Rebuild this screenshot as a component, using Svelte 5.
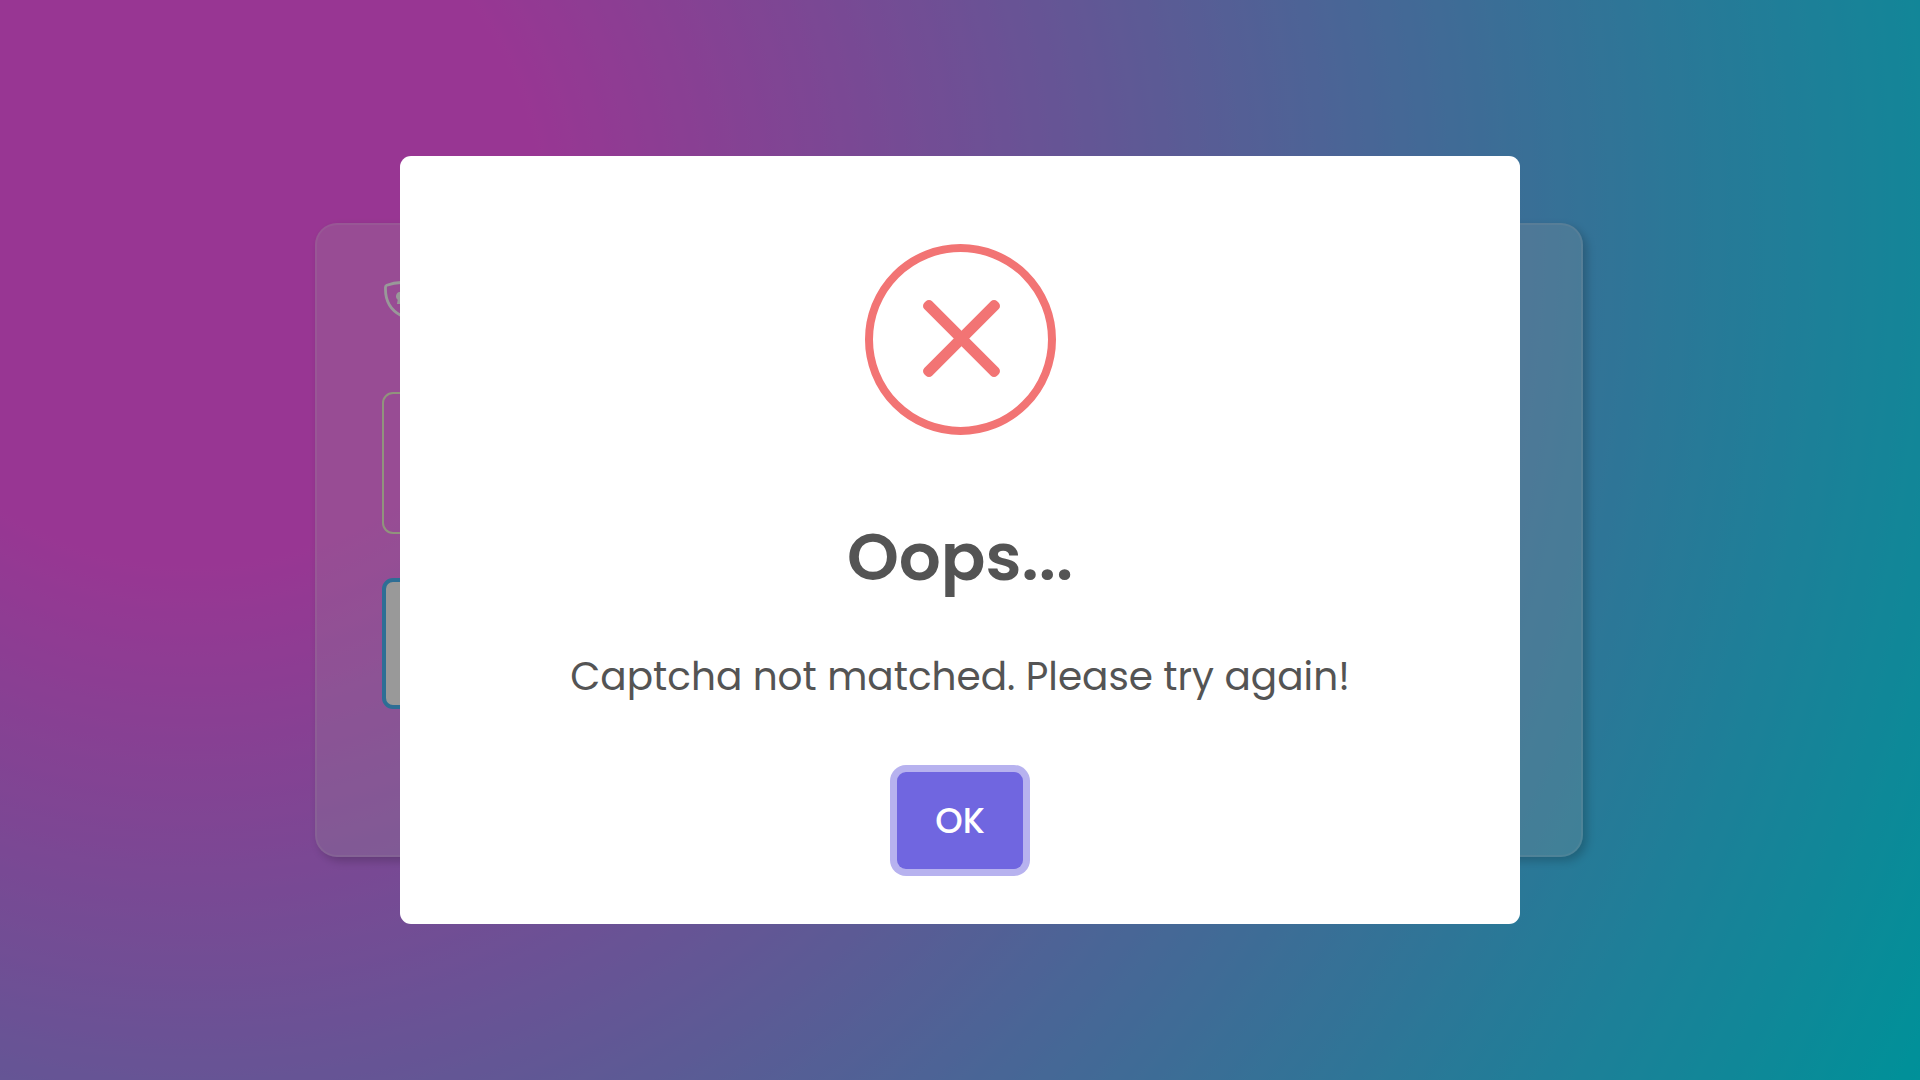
<script>
  let answer = $state('');
  let open = $state(true);
</script>

<main class="page">
  <form class="card" onsubmit={(e) => e.preventDefault()}>
    <svg class="shield" viewBox="0 0 36 36" aria-hidden="true">
      <path
        d="M19 1.5C14 1.5 8 3 4.8 4.2C3.8 4.6 3.5 5.2 3.5 6.2C3 19 8.5 29 19 34.5C29 29 34.5 19 34 6.2C34 5.200 33.700 4.600 32.700 4.200C29.500 3 24 1.500 19 1.500Z"
        fill="none"
        stroke="currentColor"
        stroke-width="2.8"
      />
      <path d="M18.500 10.800a4.500 4.500 0 0 0-2.800 8L15 23h7l-.7-4.200a4.500 4.500 0 0 0-2.800-8Z" fill="currentColor" />
    </svg>
    <div class="captcha"></div>
    <input class="answer" type="text" aria-label="Captcha" bind:value={answer} />
  </form>
</main>

{#if open}
  <div class="backdrop">
    <div class="modal" role="alertdialog" aria-modal="true" aria-labelledby="title" aria-describedby="message">
      <svg class="error" viewBox="0 0 191 191" aria-hidden="true">
        <circle cx="95.5" cy="95.5" r="91.5" fill="none" stroke="currentColor" stroke-width="8" />
        <g fill="currentColor">
          <rect x="45" y="89" width="103" height="11" rx="4.4" transform="rotate(45 96.5 94.5)" />
          <rect x="45" y="89" width="103" height="11" rx="4.4" transform="rotate(-45 96.5 94.5)" />
        </g>
      </svg>
      <h2 id="title">Oops...</h2>
      <p id="message">Captcha not matched. Please try again!</p>
      <button type="button" onclick={() => (open = false)}>OK</button>
    </div>
  </div>
{/if}

<style>
  :global(body) {
    margin: 0;
    font-family: Poppins, Inter, 'Open Sans', sans-serif;
  }

  .page {
    box-sizing: border-box;
    min-height: 100vh;
    padding-right: 22px;
    display: flex;
    align-items: center;
    justify-content: center;
    background: radial-gradient(circle at 10% 20%, #fe5bf5 18%, #00f2ff 100%);
  }

  .card {
    box-sizing: border-box;
    width: 1268px;
    max-width: 90%;
    padding: 56px 65px 146px;
    display: flex;
    flex-direction: column;
    align-items: flex-start;
    border: 2px solid rgba(255, 255, 255, 0.15);
    border-radius: 22px;
    background: rgba(255, 255, 255, 0.22);
    box-shadow: 4px 4px 10px rgba(0, 0, 0, 0.2);
  }

  .shield {
    width: 36px;
    height: 36px;
    margin-bottom: 75px;
    color: #fff;
  }

  .captcha {
    box-sizing: border-box;
    width: 100%;
    height: 142px;
    margin-bottom: 44px;
    border: 2px solid #f2f5d0;
    border-radius: 11px;
  }

  .answer {
    box-sizing: border-box;
    width: 100%;
    height: 131px;
    padding: 0 32px;
    border: 4px solid #4bb8f8;
    border-radius: 11px;
    background: #fff;
    font: inherit;
    font-size: 39px;
    outline: none;
  }

  .backdrop {
    position: fixed;
    inset: 0;
    display: flex;
    align-items: center;
    justify-content: center;
    background: rgba(0, 0, 0, 0.4);
  }

  .modal {
    box-sizing: border-box;
    width: 1120px;
    max-width: 90%;
    padding: 88px 56px 55px;
    display: flex;
    flex-direction: column;
    align-items: center;
    border-radius: 11px;
    background: #fff;
    color: #545454;
    text-align: center;
  }

  .error {
    width: 191px;
    height: 191px;
    margin-bottom: 74px;
    color: #f27474;
  }

  h2 {
    margin: 0 0 44px;
    font-size: 66px;
    font-weight: 600;
    line-height: 96px;
  }

  p {
    margin: 0 0 67px;
    font-size: 39px;
    line-height: 56px;
  }

  button {
    min-width: 126px;
    padding: 24px 38px;
    border: 0;
    border-radius: 9px;
    background: #7066e0;
    box-shadow: 0 0 0 7px rgba(112, 102, 224, 0.5);
    color: #fff;
    font: inherit;
    font-size: 35px;
    font-weight: 500;
    line-height: 49px;
    cursor: pointer;
  }
</style>
